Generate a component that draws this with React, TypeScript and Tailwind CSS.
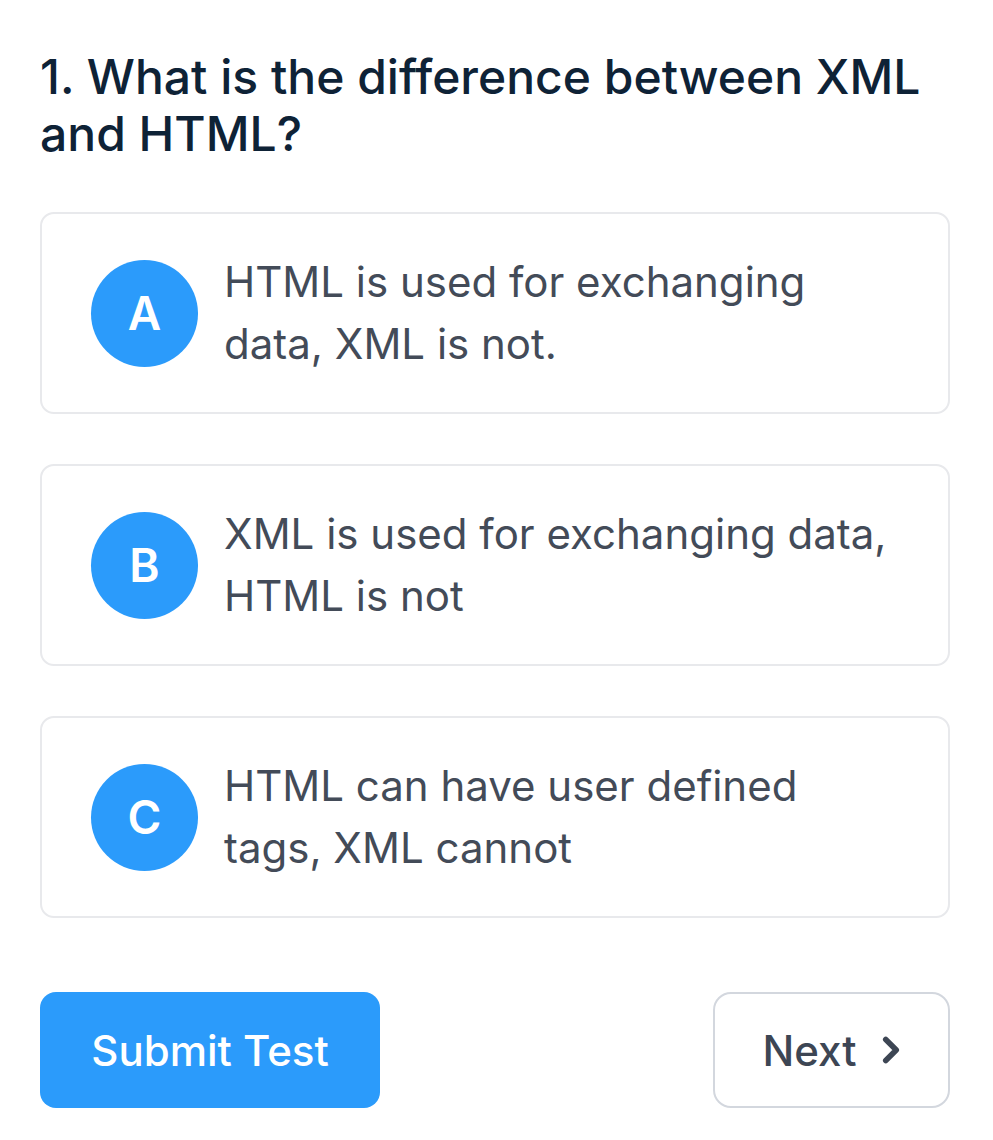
import React from 'react';
import { ChevronRight } from 'lucide-react';

const options = [
  { letter: 'A', text: 'HTML is used for exchanging data, XML is not.' },
  { letter: 'B', text: 'XML is used for exchanging data, HTML is not' },
  { letter: 'C', text: 'HTML can have user defined tags, XML cannot' },
];

export default function App() {
  return (
    <div className="min-h-screen bg-white pl-[40px] pr-[43px] pt-[48px] pb-[32px]" style={{ fontFamily: 'Inter, "Noto Sans", sans-serif' }}>
      <h1 className="text-[48px] leading-[57px] font-medium text-[#0e2236]">
        1. What is the difference between XML and HTML?
      </h1>

      <div className="mt-[50px] flex flex-col gap-[50px]">
        {options.map((o) => (
          <div
            key={o.letter}
            className="flex h-[202px] items-center gap-[26px] rounded-[14px] border-2 border-[#e8e9ec] pl-[49px] pr-[52px]"
          >
            <div className="flex h-[107px] w-[107px] shrink-0 items-center justify-center rounded-full bg-[#2b9bfb] text-[46px] font-semibold text-white">
              {o.letter}
            </div>
            <p className="text-[42px] leading-[62px] text-[#434b58]">{o.text}</p>
          </div>
        ))}
      </div>

      <div className="mt-[74px] flex items-center justify-between">
        <button className="flex h-[116px] w-[340px] items-center justify-center rounded-[16px] bg-[#2b9bfb] text-[42px] font-medium text-white">
          Submit Test
        </button>
        <button className="flex h-[116px] w-[237px] items-center justify-center gap-[14px] rounded-[18px] border-2 border-[#d3d7de] text-[42px] font-medium text-[#3d4654]">
          Next
          <ChevronRight className="-mr-[12px] h-[42px] w-[42px]" strokeWidth={3.2} />
        </button>
      </div>
    </div>
  );
}
